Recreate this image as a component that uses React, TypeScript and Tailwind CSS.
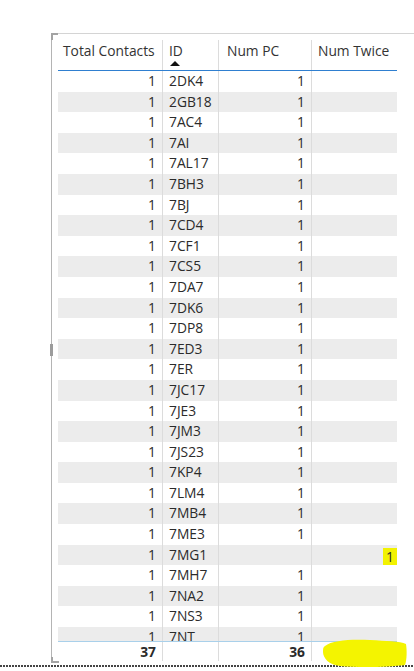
import React from "react";

const ids = [
  "2DK4", "2GB18", "7AC4", "7AI", "7AL17", "7BH3", "7BJ", "7CD4", "7CF1", "7CS5",
  "7DA7", "7DK6", "7DP8", "7ED3", "7ER", "7JC17", "7JE3", "7JM3", "7JS23", "7KP4",
  "7LM4", "7MB4", "7ME3", "7MG1", "7MH7", "7NA2", "7NS3", "7NT",
];

export default function App() {
  return (
    <div className="relative w-[414px] h-[671px] overflow-hidden bg-white font-['Open_Sans',sans-serif] text-[13.8px] text-[#2b2b2b]">
      <div className="pt-[33px] pl-[51px]">
        <div className="relative h-[630px] border-l border-t border-l-[#b4b4b4] border-t-[#d4d4d4] pl-[6px]">
          {/* header */}
          <div className="flex w-[339px] h-[37px] border-b border-[#2f7fd0] text-[#333]">
            <div className="w-[105px] mt-[6px] pt-[1px] pl-[5px] border-r border-[#dcdcdc] whitespace-nowrap">
              Total Contacts
            </div>
            <div className="w-[56px] mt-[6px] pt-[1px] pl-[6px] border-r border-[#dcdcdc]">
              <div className="leading-[19px]">ID</div>
              <svg width="10" height="5" viewBox="0 0 10 5" className="ml-[1px] mt-[1px]">
                <polygon points="0,5 5,0 10,5" fill="#111" />
              </svg>
            </div>
            <div className="w-[93px] mt-[6px] pt-[1px] pl-[8px] border-r border-[#dcdcdc]">Num PC</div>
            <div className="w-[85px] mt-[6px] pt-[1px] pl-[6px] whitespace-nowrap">Num Twice</div>
          </div>

          {/* body */}
          <div className="w-[339px] h-[570px] overflow-hidden">
            {ids.map((id, i) => (
              <div
                key={id}
                className={`flex h-[20.6px] leading-[20.6px] ${i % 2 === 1 ? "bg-[#ececec]" : "bg-white"}`}
              >
                <div className="w-[105px] pr-[6px] text-right border-r border-[#dcdcdc]">1</div>
                <div className="w-[56px] pl-[6px] border-r border-[#dcdcdc]">{id}</div>
                <div className="w-[93px] pr-[6px] text-right border-r border-[#dcdcdc]">
                  {id === "7MG1" ? "" : "1"}
                </div>
                <div className="w-[85px] flex justify-end items-center">
                  {id === "7MG1" && (
                    <span className="h-[17px] w-[14px] mt-[4px] leading-[17px] text-center bg-[#f2f200]">1</span>
                  )}
                </div>
              </div>
            ))}
          </div>

          {/* total */}
          <div className="flex w-[339px] h-[20px] leading-[20px] border-t border-[#a9d0ea] font-bold">
            <div className="w-[105px] pr-[6px] text-right border-r border-[#dcdcdc]">37</div>
            <div className="w-[56px] border-r border-[#dcdcdc]"></div>
            <div className="w-[93px] pr-[6px] text-right border-r border-[#dcdcdc]">36</div>
            <div className="w-[85px]"></div>
          </div>

          {/* corner markers */}
          <div className="absolute -left-[1px] -top-[1px] w-[7px] h-[7px] border-l-2 border-t-2 border-[#a3a3a3]" />
          <div className="absolute -left-[1px] bottom-0 w-[8px] h-[6px] border-l-2 border-b-2 border-[#a3a3a3]" />
          <div className="absolute -left-[2px] top-[310px] w-[3px] h-[12px] bg-[#9c9c9c]" />
        </div>
      </div>

      {/* dotted page edge */}
      <div className="mt-[2px] h-[2px] w-full bg-[repeating-linear-gradient(90deg,#444_0_2px,transparent_2px_3px)]" />

      {/* highlighter stroke */}
      <svg className="absolute left-[320px] top-[638px]" width="92" height="32" viewBox="0 0 92 32">
        <path
          d="M5 8 C12 2 32 1 50 2 C66 3 80 3 86 6 C87 12 87 22 85 27 C70 29 40 30 20 28 C9 27 3 20 3 14 C3 11 3 9 5 8 Z"
          fill="#f4f400"
        />
      </svg>
    </div>
  );
}
